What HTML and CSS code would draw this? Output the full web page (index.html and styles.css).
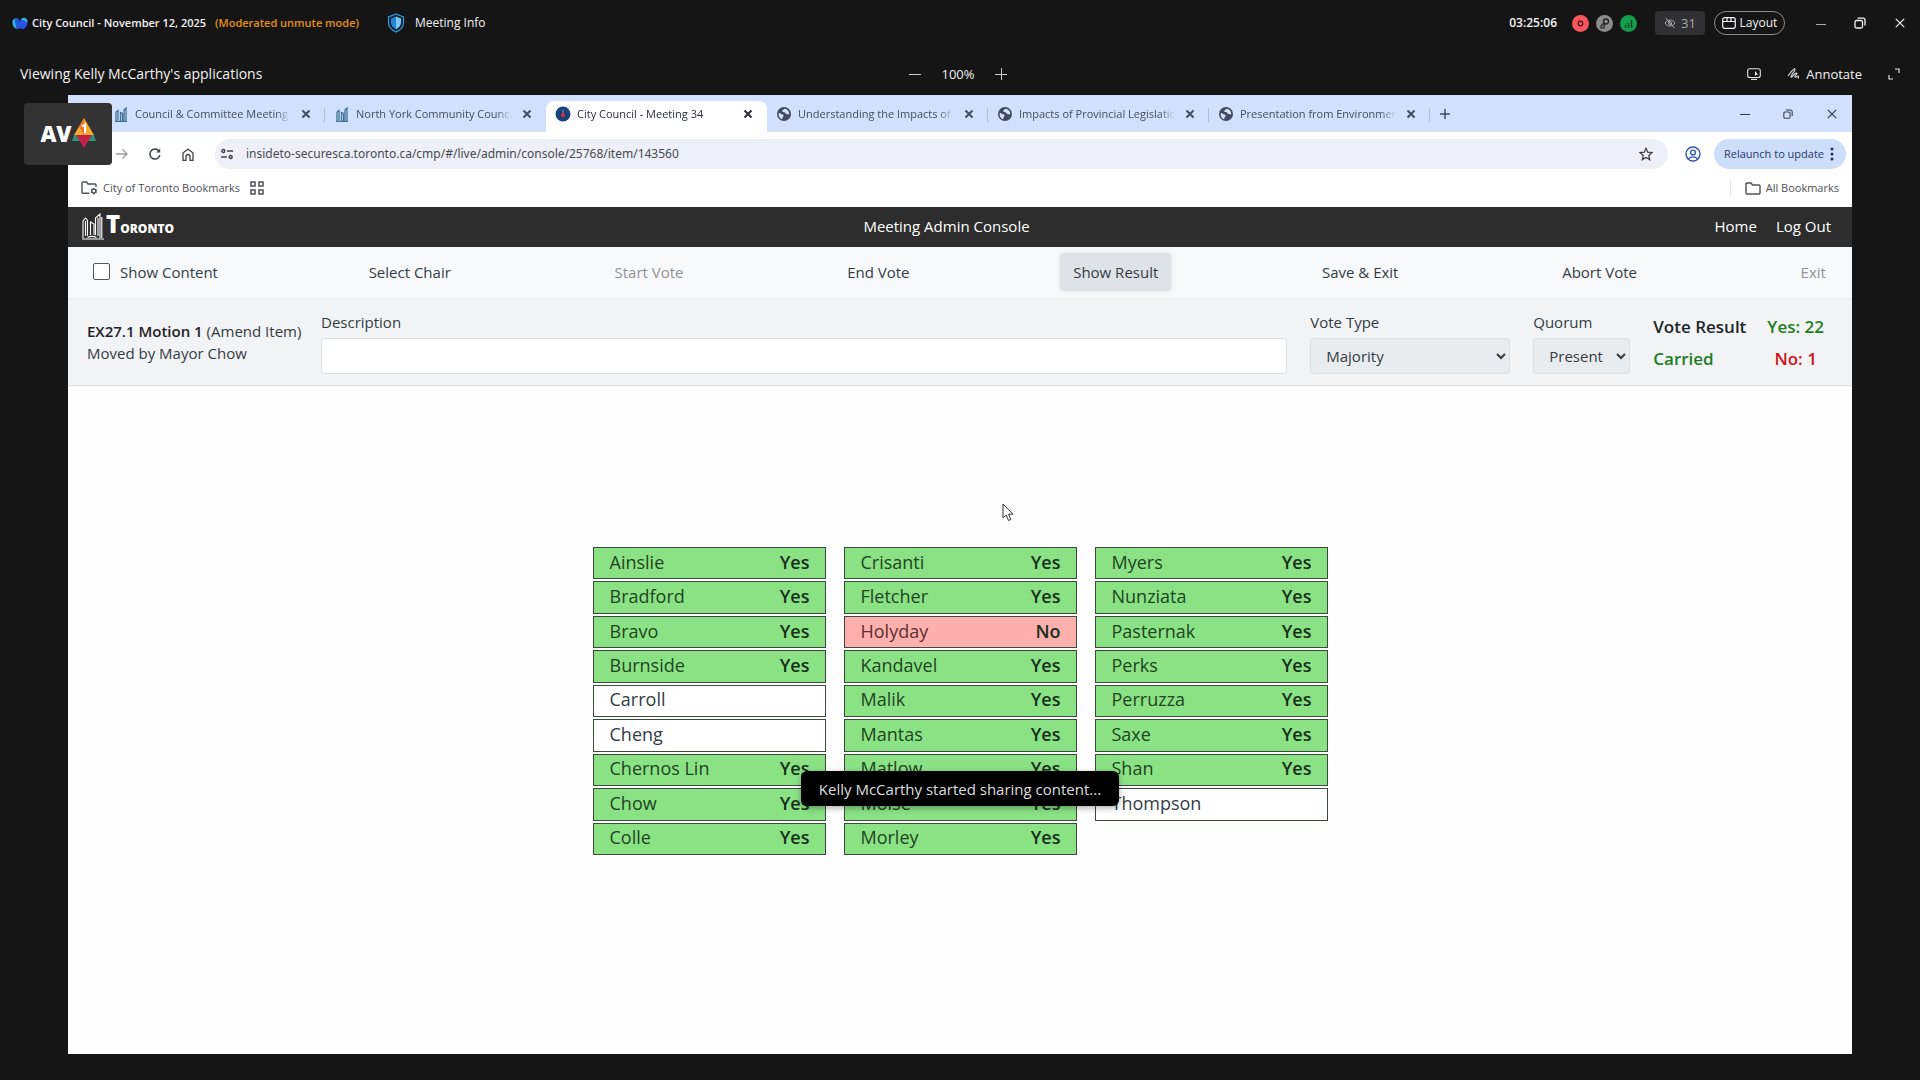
FILE: index.html
```html
<!DOCTYPE html>
<html lang="en">
<head>
<meta charset="utf-8">
<meta name="viewport" content="width=device-width, initial-scale=1">
<title>City Council - November 12, 2025</title>
<link rel="stylesheet" href="styles.css">
</head>
<body>
<svg class="defs" aria-hidden="true">
  <symbol id="i-x" viewBox="0 0 10 10"><path d="M1.5 1.5l7 7M8.500 1.5l-7 7" fill="none" stroke="currentColor"/></symbol>
  <symbol id="i-globe" viewBox="0 0 16 16"><circle cx="8" cy="8" r="7" fill="#414c60"/><path d="M2.800 7c2 0 2.200 1.600 3.600 1.600 1.600 0 1.400 1.400.6 2.200-.6.700-.4 2.200-1.200 2.400C3.500 12.300 2.200 9.500 2.800 7zM8.200 2.800c-.4 1.600-2 1-2 2.200 0 1.500 2.400.6 3 1.800.6 1.400 2 1.600 4 1.400.3-2.700-2-5.300-5-5.400z" fill="#d3e2fd"/></symbol>
  <symbol id="i-towers" viewBox="0 0 12 15"><path d="M1 14V5l2-1.500v10M5.500 14V5.500l2 1V14M9 14V3l2-2v13M0 14.300h12" fill="none" stroke="#3f7396" stroke-width="1.300"/></symbol>
  <symbol id="i-restore" viewBox="0 0 12 12"><rect x="1" y="3.500" width="7.500" height="7.500" rx="1.500" fill="none" stroke="currentColor" stroke-width="1.300"/><path d="M3.500 1.200H9a2 2 0 0 1 2 2V8.500" fill="none" stroke="currentColor" stroke-width="1.300"/></symbol>
</svg>

<header class="titlebar">
  <svg class="webex" width="16" height="13" viewBox="0 0 16 13"><path d="M1 3c-1.500 2 0 8 3.500 9C7 12.500 8 10 9 7L5 2C3.500.5 2 1.500 1 3z" fill="#2fb5d8"/><path d="M3 1.500C5 .5 7 1.500 7.500 4L9 9c-1 3-4 4-5.500 2C5 9 2 4 3 1.500z" fill="#1e57d8"/><path d="M8 4c1-3 4-4.500 6.500-2.500C17 4 15 11 11.500 12 9 12.500 7.500 11 7 9z" fill="#2a50e8"/><path d="M9 3c2-3 5-2.500 6.300.5L15 6c-1.500-2.500-3-3-6-3z" fill="#35c7c0"/></svg>
  <h1>City Council - November 12, 2025</h1>
  <span class="mode">(Moderated unmute mode)</span>
  <svg class="shield" width="18" height="20" viewBox="0 0 18 20"><path d="M9 1l7.500 3v5.500c0 4.500-3 7.500-7.500 9.500-4.500-2-7.500-5-7.500-9.500V4z" fill="#10202c" stroke="#2d9be0" stroke-width="1.200"/><path d="M9 3.500L4 5.500v4c0 3 2 5.200 5 6.800z" fill="#1f86d8"/><path d="M9 3.500l5 2v4c0 3-2 5.200-5 6.800z" fill="#7cc5f5"/></svg>
  <a href="#info">Meeting Info</a>
  <div class="status">
    <time>03:25:06</time>
    <svg width="66" height="17" viewBox="0 0 66 17"><circle cx="8.500" cy="8.500" r="8.500" fill="#f8565f"/><circle cx="8.500" cy="8.500" r="2.300" fill="none" stroke="#47161a" stroke-width="1.300"/><circle cx="32.500" cy="8.500" r="8.500" fill="#8b8b8b"/><circle cx="34" cy="6.500" r="2.500" fill="none" stroke="#222" stroke-width="1.300"/><path d="M33.500 9l-1.500 1.500v2.500h-3v-2l3.500-3.500" fill="none" stroke="#222" stroke-width="1.200"/><circle cx="56.500" cy="8.500" r="8.500" fill="#159c4c"/><path d="M53.500 13v-3M56.500 13V8M59.500 13V5" stroke="#0a4a24" stroke-width="1.500"/></svg>
    <span class="hidden-count"><svg width="12" height="12" viewBox="0 0 12 12" fill="none" stroke="currentColor"><path d="M1 6c2.500-4 7.500-4 10 0-2.500 4-7.500 4-10 0zM1.500 1l9 10"/><circle cx="6" cy="6" r="1.500"/></svg>31</span>
    <button class="layout"><svg width="14" height="12" viewBox="0 0 14 12" fill="none" stroke="currentColor" stroke-width="1.200"><rect x=".7" y=".7" width="12.600" height="10.600" rx="2"/><path d="M1 4.500h12M5 1v3M9 1v3"/></svg>Layout</button>
    <div class="winbuttons">
      <button aria-label="Minimize"><svg width="10" height="10"><path d="M0 6.500h10" stroke="#aaa"/></svg></button>
      <button aria-label="Restore"><svg width="12" height="12"><use href="#i-restore"/></svg></button>
      <button aria-label="Close"><svg width="12" height="12"><use href="#i-x"/></svg></button>
    </div>
  </div>
</header>

<div class="sharebar">
  <h2>Viewing Kelly McCarthy's applications</h2>
  <div class="zoom">
    <button aria-label="Zoom out"><svg width="12" height="12"><path d="M0 6.500h12" stroke="#ccc"/></svg></button>
    <span>100%</span>
    <button aria-label="Zoom in"><svg width="12" height="12"><path d="M0 6.500h12M6.500 0v12" stroke="#ccc"/></svg></button>
  </div>
  <div class="sharetools">
    <button aria-label="Remote control"><svg width="14" height="12" viewBox="0 0 14 12" fill="none" stroke="#e4e4e4" stroke-width="1.100"><rect x=".7" y=".7" width="12.600" height="8.800" rx="2"/><path d="M4 11.400h6"/><path d="M8 3v5l1.300-1.200H11z" fill="#fff" stroke="none"/></svg></button>
    <button class="annotate"><svg width="14" height="12" viewBox="0 0 14 12" fill="none" stroke="#e4e4e4" stroke-width="1.100"><path d="M1 8C4 4 7 0 8 1s-5 7-4 8 4-5 5.500-4-2.500 3-1.500 4 2.500-1.500 3.300-.8-.8 2 .2 2.300"/></svg>Annotate</button>
    <button aria-label="Full screen"><svg width="12" height="12" viewBox="0 0 12 12" fill="none" stroke="#e4e4e4" stroke-width="1.200"><path d="M7 1h4v4M1 7v4h4"/></svg></button>
  </div>
</div>

<main class="window">
  <div class="tabs">
    <div class="tab"><svg class="fav" width="12" height="15"><use href="#i-towers"/></svg><span>Council &amp; Committee Meeting</span><button aria-label="Close tab"><svg width="10" height="10"><use href="#i-x"/></svg></button></div>
    <div class="tab"><svg class="fav" width="12" height="15"><use href="#i-towers"/></svg><span>North York Community Council</span><button aria-label="Close tab"><svg width="10" height="10"><use href="#i-x"/></svg></button></div>
    <div class="tab active"><svg class="fav" width="16" height="16" viewBox="0 0 16 16"><circle cx="8" cy="8" r="7.500" fill="#16457f"/><path d="M5.500 12V7L8 2.500 10.500 7v5z" fill="#0d2c57"/><rect x="6" y="7" width="4" height="4.500" rx="1" fill="#c33146"/><path d="M7.200 3.500h1.500V7H7.200z" fill="#7486ad"/></svg><span>City Council - Meeting 34</span><button aria-label="Close tab"><svg width="10" height="10"><use href="#i-x"/></svg></button></div>
    <div class="tab"><svg class="fav" width="16" height="16"><use href="#i-globe"/></svg><span>Understanding the Impacts of I</span><button aria-label="Close tab"><svg width="10" height="10"><use href="#i-x"/></svg></button></div>
    <div class="tab"><svg class="fav" width="16" height="16"><use href="#i-globe"/></svg><span>Impacts of Provincial Legislatio</span><button aria-label="Close tab"><svg width="10" height="10"><use href="#i-x"/></svg></button></div>
    <div class="tab"><svg class="fav" width="16" height="16"><use href="#i-globe"/></svg><span>Presentation from Environment</span><button aria-label="Close tab"><svg width="10" height="10"><use href="#i-x"/></svg></button></div>
    <button class="newtab" aria-label="New tab"><svg width="10" height="10"><path d="M0 5h10M5 0v10" stroke="currentColor" stroke-width="1.500"/></svg></button>
    <div class="winbuttons dark">
      <button aria-label="Minimize"><svg width="10" height="10"><path d="M0 5.500h10" stroke="currentColor"/></svg></button>
      <button aria-label="Restore"><svg width="10" height="10"><use href="#i-restore"/></svg></button>
      <button aria-label="Close"><svg width="12" height="12"><use href="#i-x"/></svg></button>
    </div>
  </div>

  <div class="toolbar">
    <button aria-label="Forward" class="forward"><svg width="12" height="12" viewBox="0 0 12 12" fill="none" stroke="currentColor" stroke-width="1.300"><path d="M0 6h11M6.500 1.500L11 6l-4.500 4.500"/></svg></button>
    <button aria-label="Reload"><svg width="12" height="12" viewBox="0 0 12 12" fill="none" stroke="currentColor" stroke-width="1.500"><path d="M10.800 7.300A5 5 0 1 1 9.800 2.800"/><path d="M11.200.5v4H7.200z" fill="currentColor" stroke="none"/></svg></button>
    <button aria-label="Home"><svg width="12" height="13" viewBox="0 0 12 13" fill="none" stroke="currentColor" stroke-width="1.300"><path d="M1 12.300V5L6 1l5 4v7.300H8V8.500a2 2 0 0 0-4 0v3.800z"/></svg></button>
    <div class="omnibox">
      <svg width="12" height="12" viewBox="0 0 12 12" fill="none" stroke="currentColor" stroke-width="1.400"><circle cx="2.300" cy="3" r="1.500"/><path d="M6 3h6M0 9h6"/><circle cx="9.700" cy="9" r="1.500"/></svg>
      <input type="text" aria-label="Address" value="insideto-securesca.toronto.ca/cmp/#/live/admin/console/25768/item/143560">
      <svg width="14" height="14" viewBox="0 0 14 14" fill="none" stroke="currentColor" stroke-width="1.300"><path d="M7 1.300l1.700 3.900 4.300.4-3.200 2.800.9 4.200L7 10.400l-3.700 2.200.9-4.200L1 5.600l4.300-.4z"/></svg>
    </div>
    <button class="profile" aria-label="Profile"><svg width="16" height="16" viewBox="0 0 16 16" fill="none" stroke="#3057b0" stroke-width="1.400"><circle cx="8" cy="8" r="7"/><circle cx="8" cy="6.500" r="2.400"/><path d="M3.500 13c2-2.800 7-2.800 9 0"/></svg></button>
    <button class="relaunch">Relaunch to update<svg width="4" height="14" fill="#1d2f5c"><circle cx="2" cy="2" r="1.500"/><circle cx="2" cy="7" r="1.500"/><circle cx="2" cy="12" r="1.500"/></svg></button>
  </div>

  <div class="bookmarks">
    <a href="#b"><svg width="17" height="14" viewBox="0 0 17 14" fill="none" stroke="currentColor" stroke-width="1.400"><path d="M8.500 12.300H2a1 1 0 0 1-1-1V2a1 1 0 0 1 1-1h3.500L7 3h7a1 1 0 0 1 1 1v2"/><circle cx="12.800" cy="10" r="2"/><path d="M12.800 7v1M12.800 12v1.500M10 8.500l1 .5M15.600 8.500l-1 .5M10 11.500l1-.5M15.600 11.500l-1-.5"/></svg>City of Toronto Bookmarks</a>
    <button aria-label="Tab groups"><svg width="14" height="14" viewBox="0 0 14 14" fill="none" stroke="currentColor" stroke-width="1.500"><path d="M1 1h4v4H1zM9 1h4v4H9zM1 9h4v4H1zM9 9h4v4H9z"/></svg></button>
    <a class="all" href="#all"><svg width="16" height="13" viewBox="0 0 16 13" fill="none" stroke="currentColor" stroke-width="1.400"><path d="M2 1h4l1.500 2H14a1 1 0 0 1 1 1v7a1 1 0 0 1-1 1H2a1 1 0 0 1-1-1V2a1 1 0 0 1 1-1z"/></svg>All Bookmarks</a>
  </div>

  <div class="apphead">
    <a class="logo" href="#toronto"><svg width="22" height="27" viewBox="0 0 22 27" fill="none" stroke="#fff" stroke-width="1.100"><path d="M1 25V8l2.500-3 2 2.500V23M3.500 8v15M8.500 22V9l3.500 2v11M13.500 22V5L18 1v24M16 5v18M19.800 4v21M0 26h22M5.500 24.500c3-1.500 6-1.500 9 0"/></svg><span>T<small>ORONTO</small></span></a>
    <h2>Meeting Admin Console</h2>
    <nav><a href="#home">Home</a><a href="#logout">Log Out</a></nav>
  </div>

  <div class="actions">
    <label><input type="checkbox">Show Content</label>
    <button>Select Chair</button>
    <button disabled>Start Vote</button>
    <button>End Vote</button>
    <button class="pressed">Show Result</button>
    <button>Save &amp; Exit</button>
    <button>Abort Vote</button>
    <button disabled>Exit</button>
  </div>

  <form class="motion">
    <p><strong>EX27.1 Motion 1</strong> (Amend Item)<br>Moved by Mayor Chow</p>
    <div class="field grow"><label for="desc">Description</label><input id="desc" type="text"></div>
    <div class="field type"><label for="type">Vote Type</label><select id="type"><option>Majority</option></select></div>
    <div class="field quorum"><label for="quorum">Quorum</label><select id="quorum"><option>Present</option></select></div>
    <div class="result"><span>Vote Result</span><span class="yes">Yes: 22</span><span class="yes">Carried</span><span class="no">No: 1</span></div>
  </form>

  <section class="votes">
    <ul>
      <li class="y">Ainslie<b>Yes</b></li><li class="y">Bradford<b>Yes</b></li><li class="y">Bravo<b>Yes</b></li><li class="y">Burnside<b>Yes</b></li><li>Carroll</li><li>Cheng</li><li class="y">Chernos Lin<b>Yes</b></li><li class="y">Chow<b>Yes</b></li><li class="y">Colle<b>Yes</b></li>
    </ul>
    <ul>
      <li class="y">Crisanti<b>Yes</b></li><li class="y">Fletcher<b>Yes</b></li><li class="n">Holyday<b>No</b></li><li class="y">Kandavel<b>Yes</b></li><li class="y">Malik<b>Yes</b></li><li class="y">Mantas<b>Yes</b></li><li class="y">Matlow<b>Yes</b></li><li class="y">Moise<b>Yes</b></li><li class="y">Morley<b>Yes</b></li>
    </ul>
    <ul>
      <li class="y">Myers<b>Yes</b></li><li class="y">Nunziata<b>Yes</b></li><li class="y">Pasternak<b>Yes</b></li><li class="y">Perks<b>Yes</b></li><li class="y">Perruzza<b>Yes</b></li><li class="y">Saxe<b>Yes</b></li><li class="y">Shan<b>Yes</b></li><li>Thompson</li>
    </ul>
    <svg class="cursor" width="12" height="19" viewBox="0 0 12 19"><path d="M1 1v14l3.200-3 2.300 5.500 2.300-1L6.500 11.200H11z" fill="#fff" stroke="#333"/></svg>
    <div class="toast" role="status"><span>Kelly McCarthy started sharing content...</span></div>
  </section>
</main>

<div class="av1">AV<svg width="24" height="30" viewBox="0 0 24 30"><path d="M12 0L2 17h20z" fill="#f6a731"/><path d="M12 0L7 8.500 12 17z" fill="#e8792b"/><path d="M2 17L0 23h24l-2-6z" fill="#2c9277"/><path d="M4 17h16l-8 13z" fill="#c5204b"/><path d="M10 8.500L13 6.500V15" fill="none" stroke="#fff" stroke-width="2"/></svg></div>
</body>
</html>
```
FILE: styles.css
```css
* { box-sizing: border-box; }

body {
  margin: 0;
  min-height: 100vh;
  display: flex;
  flex-direction: column;
  background: #151515;
  color: #f2f2f2;
  font: 11px/16px "Open Sans", "Noto Sans", sans-serif;
}

h1, h2, p, ul { margin: 0; padding: 0; font: inherit; }
svg { display: block; flex: none; }
a { color: inherit; text-decoration: none; }
button {
  display: flex;
  align-items: center;
  padding: 0;
  border: 0;
  background: none;
  color: inherit;
  font: inherit;
}
.defs { position: absolute; width: 0; height: 0; }

/* Meeting title bar */
.titlebar {
  display: flex;
  align-items: center;
  height: 46px;
  padding: 0 14px 0 12px;
  font-weight: 600;
}
.webex { margin-right: 4px; }
.mode { margin-left: 9px; color: #e59014; }
.shield { margin: 0 10px 0 28px; }
.titlebar > a { font-size: 12px; font-weight: 400; }
.status { display: flex; align-items: center; margin-left: auto; }
time { margin-right: 15px; font-size: 12px; }
.hidden-count {
  display: flex;
  align-items: center;
  justify-content: center;
  gap: 5px;
  width: 50px;
  height: 24px;
  margin: 0 9px 0 17px;
  border-radius: 4px;
  background: #303033;
  color: #aaa;
  font-size: 13px;
  font-weight: 400;
}
.layout {
  justify-content: center;
  gap: 4px;
  width: 71px;
  height: 24px;
  border: 1px solid #8c8c8c;
  border-radius: 12px;
  font-size: 12px;
  font-weight: 500;
}
.winbuttons { display: flex; gap: 28px; margin-left: 31px; }

/* Sharing bar */
.sharebar {
  display: grid;
  grid-template-columns: 1fr auto 1fr;
  align-items: center;
  height: 49px;
  padding: 7px 20px 0;
}
.sharebar h2 { font-size: 14px; }
.zoom { display: flex; align-items: center; gap: 20px; margin-right: 4px; font-size: 13px; }
.sharetools {
  display: flex;
  justify-content: flex-end;
  align-items: center;
  gap: 26px;
}
.annotate { gap: 5px; font-size: 13px; font-weight: 500; }

/* Shared browser window */
.window {
  flex: 1;
  display: flex;
  flex-direction: column;
  margin: 0 68px 26px;
  background: #fefefe;
  color: #333c45;
}
.tabs {
  display: flex;
  align-items: center;
  height: 37px;
  padding: 6px 14px 0 36px;
  background: #d0e0fd;
  color: #434e63;
}
.tab {
  display: flex;
  align-items: center;
  width: 221px;
  height: 31px;
  padding: 0 14px 5px 9px;
  position: relative;
}
.tab::after {
  content: "";
  position: absolute;
  right: 0;
  top: 7px;
  width: 1px;
  height: 14px;
  background: #aebdd8;
}
.tab.active::after, .tab:nth-child(2)::after { display: none; }
.fav { width: 16px; margin-right: 6px; }
.tab span {
  flex: 1;
  overflow: hidden;
  white-space: nowrap;
  margin-right: 10px;
  -webkit-mask-image: linear-gradient(to right, #000 90%, transparent);
  mask-image: linear-gradient(to right, #000 90%, transparent);
}
.tab svg { stroke-width: 2; }
.tab.active { border-radius: 8px 8px 0 0; background: #fff; color: #2b2f36; }
.newtab { margin: 0 0 5px 10px; }
.dark { margin: 0 0 5px auto; gap: 33px; color: #333c4c; }

.toolbar {
  display: flex;
  align-items: center;
  height: 42px;
  padding: 2px 6px 0 48px;
  background: #fff;
  color: #3f4246;
}
.toolbar > button { margin-right: 21px; }
.toolbar .forward { color: #9a9a9a; }
.omnibox {
  flex: 1;
  display: flex;
  align-items: center;
  height: 30px;
  padding: 0 15px 0 6px;
  border-radius: 15px;
  background: #edf0f8;
}
.omnibox input {
  flex: 1;
  margin-left: 13px;
  padding: 0;
  border: 0;
  background: none;
  color: #464a50;
  font: 12px/20px "Noto Sans", sans-serif;
}
.toolbar .profile { margin: 0 13px 0 17px; }
.toolbar .relaunch {
  justify-content: space-between;
  width: 132px;
  height: 30px;
  margin: 0;
  padding: 0 12px 0 10px;
  border-radius: 15px;
  background: #cddefb;
  color: #253a68;
}
.bookmarks {
  display: flex;
  align-items: center;
  gap: 10px;
  height: 33px;
  padding: 0 13px 5px;
  background: #fff;
  color: #4d5054;
}
.bookmarks a { display: flex; align-items: center; gap: 5px; }
.bookmarks .all { margin-left: auto; padding-left: 14px; border-left: 1px solid #e3e6ea; }

/* Admin console */
.apphead {
  display: grid;
  grid-template-columns: 1fr auto 1fr;
  align-items: center;
  height: 40px;
  padding: 0 21px 2px 14px;
  background: #2d2d2d;
  color: #fff;
  font-size: 15px;
}
.logo {
  display: flex;
  align-items: flex-end;
  gap: 2px;
  font: 800 24px/22px "Open Sans", sans-serif;
}
.logo small { font-size: 12px; }
.apphead h2 { margin-right: 20px; }
.apphead nav { display: flex; justify-content: flex-end; gap: 19px; }

.actions {
  display: flex;
  align-items: center;
  justify-content: space-between;
  height: 52px;
  padding: 0 13px 2px 25px;
  border-bottom: 1px solid #eaecee;
  background: #f8f9fb;
  font-size: 15px;
}
.actions label { display: flex; align-items: center; gap: 10px; }
.actions input {
  appearance: none;
  width: 17px;
  height: 17px;
  margin: 0;
  border: 1px solid #555;
  border-radius: 2px;
  background: #fff;
}
.actions button { height: 38px; padding: 0 13px; }
.actions button:disabled { color: #8f9397; }
.actions .pressed { border-radius: 3px; background: #dfe3e7; box-shadow: 0 0 4px #dfe3e7; }

.motion {
  display: flex;
  align-items: center;
  gap: 23px;
  height: 87px;
  padding: 0 28px 0 19px;
  border-bottom: 1px solid #d9dbdd;
  background: #f2f3f4;
  font-size: 15px;
  line-height: 22px;
}
.motion p { width: 211px; white-space: nowrap; }
.motion strong { font-weight: 600; color: #1f2328; }
.field { display: flex; flex-direction: column; gap: 5px; }
.field input, .field select {
  width: 100%;
  height: 36px;
  padding: 0 14px;
  border: 1px solid #dcdfe2;
  border-radius: 3px;
  background: #fff;
  color: inherit;
  font: inherit;
}
.field select { padding: 0 0 0 11px; background: #e9ecef; }
.grow { flex: 1; }
.type { width: 200px; }
.quorum { width: 97px; }
.result {
  display: grid;
  grid-template-columns: auto auto;
  gap: 10px 21px;
  padding-top: 1px;
  font-size: 17px;
  font-weight: 600;
  color: #212529;
}
.result span:nth-child(even) { text-align: center; }
.result .yes { color: #1c7d22; }
.result .no { color: #d0121b; }

.votes {
  position: relative;
  display: flex;
  justify-content: center;
  gap: 18px;
  padding: 161px 0 40px;
  font-size: 18px;
}
.votes ul {
  display: grid;
  grid-template-rows: repeat(9, 1fr);
  gap: 2px;
  width: 233px;
  height: 308px;
  list-style: none;
}
.votes li {
  display: flex;
  align-items: center;
  justify-content: space-between;
  padding: 0 15px 3px 16px;
  border: 1px solid #3c4a3c;
  background: #fff;
}
.votes .y { background: #8ae285; color: #20451f; }
.votes .n { background: #ffb0ae; color: #5a2f30; }
.votes b { font-weight: 600; color: #16301a; }
.cursor { position: absolute; left: 934px; top: 117px; }
.toast {
  position: absolute;
  left: 0;
  right: 0;
  top: 385px;
  display: flex;
  justify-content: center;
}
.toast span {
  width: 318px;
  padding: 8px 0 7px;
  border-radius: 6px;
  background: #000;
  box-shadow: 0 2px 6px #0005;
  color: #ddd;
  font-size: 15px;
  line-height: 20px;
  text-align: center;
}

.av1 {
  position: absolute;
  left: 24px;
  top: 103px;
  display: flex;
  align-items: center;
  justify-content: center;
  width: 88px;
  height: 62px;
  padding-bottom: 2px;
  border-radius: 4px;
  background: #333;
  color: #fff;
  font: 800 22px/30px "Open Sans", sans-serif;
}
```
